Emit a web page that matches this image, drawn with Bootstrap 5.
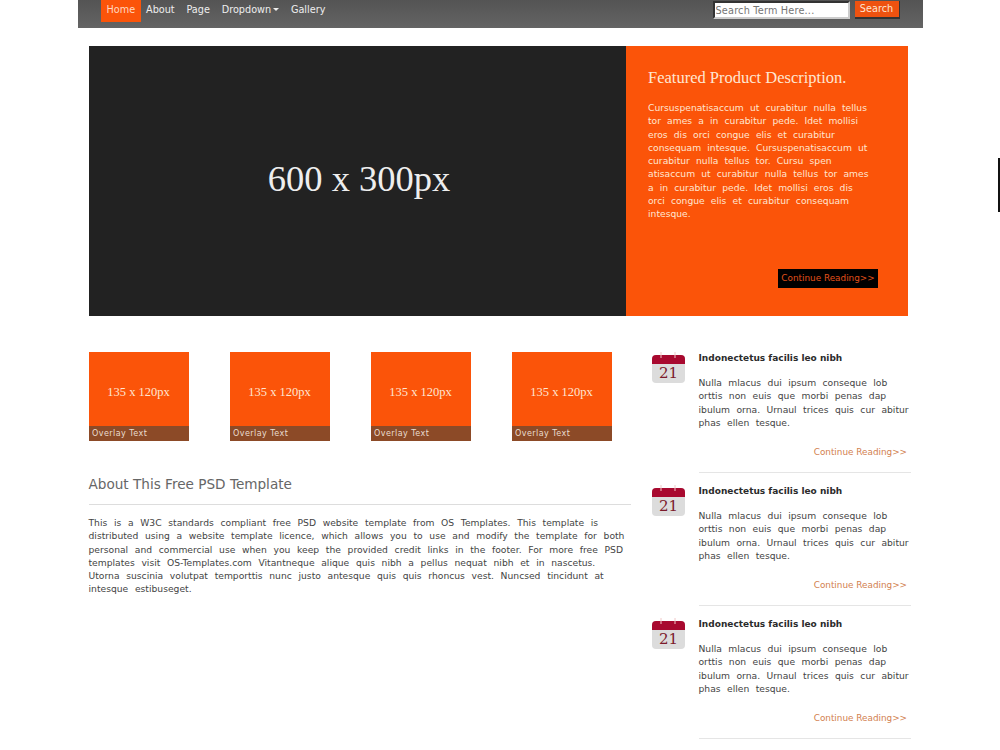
<!DOCTYPE html>
<html lang="en">
<head>
  <meta charset="UTF-8" />
  <meta name="viewport" content="width=device-width, initial-scale=1.0"/>
  <title>Free PSD Template</title>
  <link href="https://cdn.jsdelivr.net/npm/bootstrap@5.3.3/dist/css/bootstrap.min.css" rel="stylesheet">
  <style>
    body { font-family: "DejaVu Sans", Verdana, sans-serif; font-size: 9.2px; color: #333; overflow: hidden; height: 750px; }
    .page-wrap { width: 845px; margin: 0 auto; }

    .top-bar { height: 28px; background: linear-gradient(#545454, #646464); padding: 0 23px; }
    .top-links a { display: block; height: 22px; padding: 0 5.9px; line-height: 19px; color: #eee; text-decoration: none; font-size: 9.7px; }
    .top-links a.active { background: #fb5409; color: #ffd9c0; padding: 0 6px; margin-right: -1px; }
    .top-links .dropdown-toggle::after { vertical-align: 2px; border-top-width: 3px; border-left-width: 3px; border-right-width: 3px; margin-left: 2px; }
    .search-input { width: 137px; height: 18px; margin: 1px 5px 0 0; border: 2px solid #333; border-right-color: #ccc; border-bottom-color: #ccc; padding: 0 1px; font-size: 9.7px; color: #777; background: #fff; letter-spacing: .2px; }
    .search-btn { height: 18px; width: 45px; margin-top: 1px; padding: 0; border: 0; border-right: 1px solid #333; border-bottom: 2px solid #333; border-radius: 0; background: #ee5210; color: #ffe3cf; font-size: 9.7px; line-height: 16px; }

    .hero-box { margin: 18px 15px 0 11px; height: 270px; }
    .hero-pic { width: 537px; padding: 0 0 3px 4px; background: #222; color: #eee; font-family: "Liberation Serif", Georgia, serif; font-size: 36.5px; }
    .hero-info { width: 282px; background: #fb5409; color: #ffe6d2; padding: 23px 22px 0 22.5px; }
    .hero-info h2 { font-family: "Liberation Serif", Georgia, serif; font-size: 16.5px; font-weight: 400; line-height: 17px; margin: 0 0 15px; }
    .hero-info p { line-height: 13.3px; word-spacing: 3.2px; margin: 0; white-space: nowrap; }
    .hero-more { position: absolute; right: 30px; bottom: 28px; width: 100px; height: 19px; padding-left: 1px; background: #000; color: #e0501a; font-size: 8.85px; line-height: 19px; text-align: center; text-decoration: none; white-space: nowrap; }

    .main-area { margin: 36px 0 0 11px; }
    .left-side { width: 542px; }
    .thumb-row { column-gap: 41px; }
    .thumb-box { width: 100px; height: 89px; background: #fb5409; color: #ffe6d2; font-family: "Liberation Serif", Georgia, serif; font-size: 12.5px; padding-bottom: 8px; }
    .thumb-cap { position: absolute; left: 0; right: 0; bottom: 0; height: 15px; background: #8c4a27; color: #eadccf; font-family: "DejaVu Sans", sans-serif; font-size: 8px; line-height: 16px; padding-left: 3.5px; letter-spacing: .45px; }
    .about-title { font-size: 13.6px; font-weight: 400; color: #666; line-height: 18px; margin: 34px 0 11px; padding: 0; }
    .about-rule { border-top: 1px solid #ddd; margin: 0 0 11px; opacity: 1; }
    .about-text { line-height: 13.3px; word-spacing: 3.75px; white-space: nowrap; margin: 0; color: #444; }

    .right-side { margin-left: 21px; width: 259px; }
    .news-item { height: 133px; }
    .cal-icon { width: 33px; height: 31px; margin: 0 14px 0 0; flex: none; }
    .news-body { width: 212px; }
    .news-body h6 { font-size: 9px; font-weight: 700; color: #2b2b2b; line-height: 12px; margin: 0 0 12px; }
    .news-body p { line-height: 13.3px; word-spacing: 3.5px; white-space: nowrap; margin: 0 0 16.5px; color: #444; }
    .news-more { display: block; text-align: right; padding-right: 3.5px; color: #d2814f; font-size: 8.85px; text-decoration: none; line-height: 13px; }
    .news-rule { border-top: 1px solid #e5e5e5; margin: 13px 0 0; opacity: 1; }
    .edge-mark { position: absolute; right: 0; top: 158px; width: 2px; height: 54px; background: #111; }
  </style>
</head>
<body class="bg-white">
  <div class="edge-mark"></div>
  <div class="page-wrap">
    <div class="top-bar d-flex justify-content-between">
      <div class="top-links d-flex">
        <a class="active" href="#">Home</a>
        <a href="#">About</a>
        <a href="#">Page</a>
        <a class="dropdown-toggle" href="#">Dropdown</a>
        <a href="#">Gallery</a>
      </div>
      <form class="d-flex align-items-start">
        <input class="search-input" type="text" placeholder="Search Term Here...">
        <button class="btn search-btn" type="button">Search</button>
      </form>
    </div>

    <div class="hero-box d-flex">
      <div class="hero-pic d-flex align-items-center justify-content-center">600 x 300px</div>
      <div class="hero-info position-relative">
        <h2>Featured Product Description.</h2>
        <p>Cursuspenatisaccum ut curabitur nulla tellus<br>tor ames a in curabitur pede. Idet mollisi<br>eros dis orci congue elis et curabitur<br>consequam intesque. Cursuspenatisaccum ut<br>curabitur nulla tellus tor. Cursu spen<br>atisaccum ut curabitur nulla tellus tor ames<br>a in curabitur pede. Idet mollisi eros dis<br>orci congue elis et curabitur consequam<br>intesque.</p>
        <a class="hero-more" href="#">Continue Reading&gt;&gt;</a>
      </div>
    </div>

    <div class="main-area d-flex">
      <div class="left-side">
        <div class="d-flex thumb-row">
          <div class="thumb-box position-relative d-flex align-items-center justify-content-center">135 x 120px<div class="thumb-cap">Overlay Text</div></div>
          <div class="thumb-box position-relative d-flex align-items-center justify-content-center">135 x 120px<div class="thumb-cap">Overlay Text</div></div>
          <div class="thumb-box position-relative d-flex align-items-center justify-content-center">135 x 120px<div class="thumb-cap">Overlay Text</div></div>
          <div class="thumb-box position-relative d-flex align-items-center justify-content-center">135 x 120px<div class="thumb-cap">Overlay Text</div></div>
        </div>
        <h4 class="about-title">About This Free PSD Template</h4>
        <hr class="about-rule">
        <p class="about-text">This is a W3C standards compliant free PSD website template from OS Templates. This template is<br>distributed using a website template licence, which allows you to use and modify the template for both<br>personal and commercial use when you keep the provided credit links in the footer. For more free PSD<br>templates visit OS-Templates.com Vitantneque alique quis nibh a pellus nequat nibh et in nascetus.<br>Utorna suscinia volutpat temporttis nunc justo antesque quis quis rhoncus vest. Nuncsed tincidunt at<br>intesque estibuseget.</p>
      </div>
      <div class="right-side">
        <div class="news-item d-flex">
          <svg class="cal-icon" viewBox="0 0 33 31"><rect y="3" width="33" height="28" rx="4" fill="#dcdcdc"/><path d="M0 12V7a4 4 0 0 1 4-4h25a4 4 0 0 1 4 4v5z" fill="#a8092f"/><path d="M9 0v6M23 0v6" stroke="#f0c8c8" stroke-width="1"/><text x="16.5" y="26" text-anchor="middle" font-family="DejaVu Serif, serif" font-size="15" fill="#7c1a2b">21</text></svg>
          <div class="news-body">
            <h6>Indonectetus facilis leo nibh</h6>
            <p>Nulla mlacus dui ipsum conseque lob<br>orttis non euis que morbi penas dap<br>ibulum orna. Urnaul trices quis cur abitur<br>phas ellen tesque.</p>
            <a class="news-more" href="#">Continue Reading&gt;&gt;</a>
            <hr class="news-rule">
          </div>
        </div>
        <div class="news-item d-flex">
          <svg class="cal-icon" viewBox="0 0 33 31"><rect y="3" width="33" height="28" rx="4" fill="#dcdcdc"/><path d="M0 12V7a4 4 0 0 1 4-4h25a4 4 0 0 1 4 4v5z" fill="#a8092f"/><path d="M9 0v6M23 0v6" stroke="#f0c8c8" stroke-width="1"/><text x="16.5" y="26" text-anchor="middle" font-family="DejaVu Serif, serif" font-size="15" fill="#7c1a2b">21</text></svg>
          <div class="news-body">
            <h6>Indonectetus facilis leo nibh</h6>
            <p>Nulla mlacus dui ipsum conseque lob<br>orttis non euis que morbi penas dap<br>ibulum orna. Urnaul trices quis cur abitur<br>phas ellen tesque.</p>
            <a class="news-more" href="#">Continue Reading&gt;&gt;</a>
            <hr class="news-rule">
          </div>
        </div>
        <div class="news-item d-flex">
          <svg class="cal-icon" viewBox="0 0 33 31"><rect y="3" width="33" height="28" rx="4" fill="#dcdcdc"/><path d="M0 12V7a4 4 0 0 1 4-4h25a4 4 0 0 1 4 4v5z" fill="#a8092f"/><path d="M9 0v6M23 0v6" stroke="#f0c8c8" stroke-width="1"/><text x="16.5" y="26" text-anchor="middle" font-family="DejaVu Serif, serif" font-size="15" fill="#7c1a2b">21</text></svg>
          <div class="news-body">
            <h6>Indonectetus facilis leo nibh</h6>
            <p>Nulla mlacus dui ipsum conseque lob<br>orttis non euis que morbi penas dap<br>ibulum orna. Urnaul trices quis cur abitur<br>phas ellen tesque.</p>
            <a class="news-more" href="#">Continue Reading&gt;&gt;</a>
            <hr class="news-rule">
          </div>
        </div>
      </div>
    </div>
  </div>
  <script src="https://cdn.jsdelivr.net/npm/bootstrap@5.3.3/dist/js/bootstrap.bundle.min.js"></script>
</body>
</html>
